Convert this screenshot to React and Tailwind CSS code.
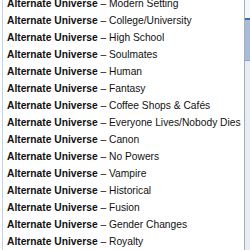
import React from "react";

const items = [
  "Modern Setting",
  "College/University",
  "High School",
  "Soulmates",
  "Human",
  "Fantasy",
  "Coffee Shops & Cafés",
  "Everyone Lives/Nobody Dies",
  "Canon",
  "No Powers",
  "Vampire",
  "Historical",
  "Fusion",
  "Gender Changes",
  "Royalty",
];

export default function App() {
  return (
    <div className="w-[250px] h-[250px] overflow-hidden bg-white flex">
      <div className="w-[2px] shrink-0 bg-white" />
      <div className="w-[1px] shrink-0 bg-[#c5d3e0]" />
      <div
        className="flex-1 min-w-0 overflow-hidden flex flex-col pl-[4px] -mt-[5px] text-[10.25px] text-[#111] leading-[17px]"
        style={{ fontFamily: '"Liberation Sans", Arial, sans-serif' }}
      >
        {items.map((t) => (
          <div key={t} className="h-[17px] shrink-0 whitespace-nowrap">
            <span className="font-bold">Alternate Universe</span>
            <span> – {t}</span>
          </div>
        ))}
      </div>
      <div className="w-[6px] shrink-0 flex flex-col bg-[#eef1f5] border-l border-[#9fb0c4]">
        <div className="h-[18px] bg-[#f4f6f9]" />
        <div className="h-[2px] bg-[#3f6fa8]" />
        <div className="h-[40px] bg-[#a9bcd6]" />
        <div className="h-[1px] bg-[#8ea4c2]" />
        <div className="flex-1 bg-[#e9edf2]" />
      </div>
    </div>
  );
}
